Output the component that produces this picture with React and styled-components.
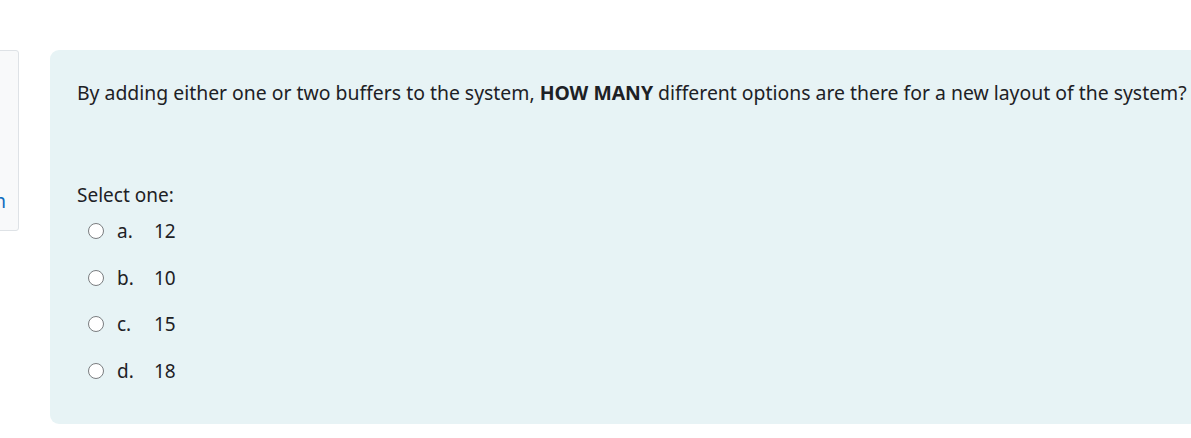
import React from 'react';
import styled, { createGlobalStyle } from 'styled-components';

const GlobalStyle = createGlobalStyle`
  html, body {
    margin: 0;
    padding: 0;
    background: #fff;
    overflow: hidden;
  }
  body {
    font-family: "Noto Sans", "Open Sans", sans-serif;
    color: #1d2125;
  }
`;

const Page = styled.div`
  display: flex;
  align-items: flex-start;
  gap: 31px;
  padding-top: 50px;
  width: 1191px;
  height: 438px;
  box-sizing: border-box;
`;

const SideCard = styled.div`
  flex: 0 0 140px;
  margin-left: -121px;
  height: 181px;
  box-sizing: border-box;
  background: #f8f9fa;
  border: 1px solid #dee2e6;
  border-radius: 0 3px 3px 0;
  display: flex;
  align-items: flex-end;
  justify-content: flex-end;
  padding: 0 12px 16px 0;
  overflow: hidden;
`;

const SideLink = styled.span`
  font-size: 19px;
  color: #0f6cbf;
  white-space: nowrap;
`;

const QuestionPanel = styled.div`
  flex: 0 0 1200px;
  height: 374px;
  box-sizing: border-box;
  background: #e7f3f5;
  border-radius: 9px 0 0 9px;
  padding: 27px 0 0 27px;
`;

const QuestionText = styled.p`
  margin: 0;
  font-size: 19.4px;
  line-height: 32px;
  white-space: nowrap;
`;

const Prompt = styled.div`
  margin-top: 70px;
  font-size: 19px;
  line-height: 32px;
`;

const Options = styled.div`
  display: flex;
  flex-direction: column;
  gap: 14.5px;
  padding-left: 11px;
  margin-top: 4px;
`;

const Option = styled.label`
  display: flex;
  align-items: center;
  height: 32px;
  font-size: 19px;
`;

const Radio = styled.span`
  width: 16px;
  height: 16px;
  box-sizing: border-box;
  border: 1.5px solid #7a7d80;
  border-radius: 50%;
  background: #fff;
  margin-right: 13px;
`;

const Letter = styled.span`
  width: 37px;
`;

const options = [
  ['a.', '12'],
  ['b.', '10'],
  ['c.', '15'],
  ['d.', '18'],
];

export default function App() {
  return (
    <>
      <GlobalStyle />
      <Page>
        <SideCard>
          <SideLink>Navigation</SideLink>
        </SideCard>
        <QuestionPanel>
          <QuestionText>
            By adding either one or two buffers to the system, <b>HOW MANY</b> different options are there for a new layout of the system?
          </QuestionText>
          <Prompt>Select one:</Prompt>
          <Options>
            {options.map(([l, v]) => (
              <Option key={l}>
                <Radio />
                <Letter>{l}</Letter>
                <span>{v}</span>
              </Option>
            ))}
          </Options>
        </QuestionPanel>
      </Page>
    </>
  );
}
